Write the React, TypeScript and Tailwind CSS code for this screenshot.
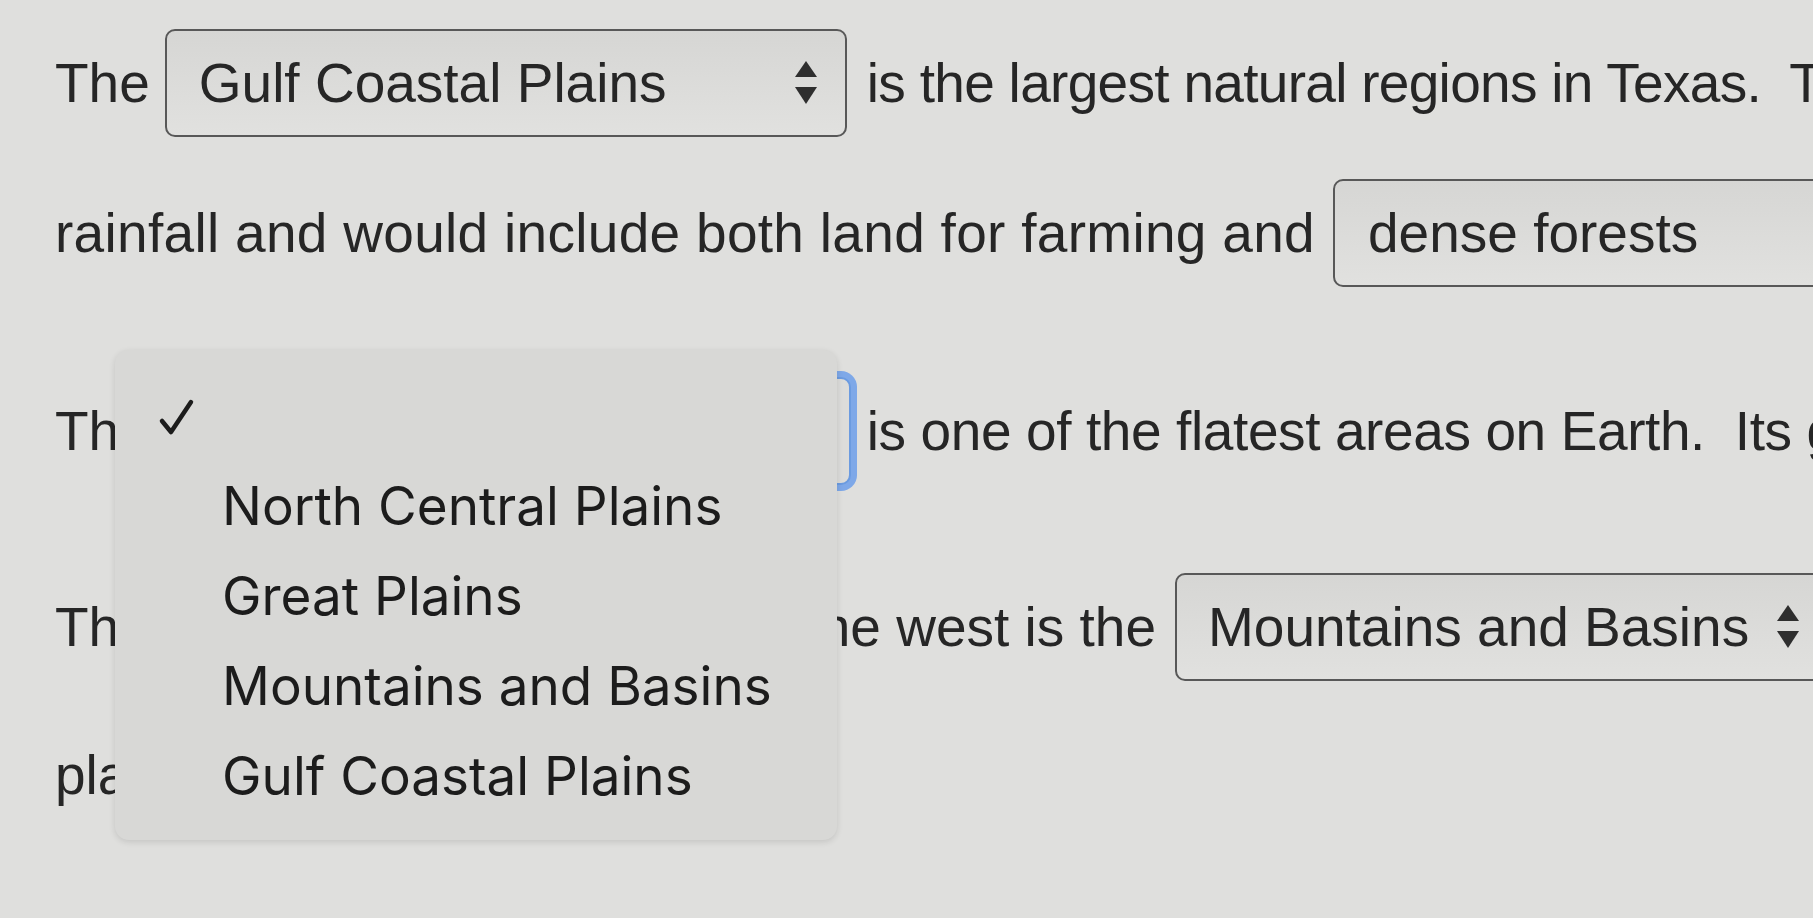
import React from "react";

const textFont = { fontFamily: '"Liberation Sans", Arial, sans-serif' };

function Arrows() {
  return (
    <svg width="22" height="46" viewBox="0 0 22 46" className="shrink-0">
      <polygon points="11,1 22,17 0,17" fill="#2e2e2e" />
      <polygon points="0,27 22,27 11,44" fill="#2e2e2e" />
    </svg>
  );
}

function Select({
  label,
  className,
  padLeft,
  arrows = true,
}: {
  label: string;
  className: string;
  padLeft: string;
  arrows?: boolean;
}) {
  return (
    <div
      className={`shrink-0 h-[108px] rounded-[10px] border-2 border-[#585858] bg-gradient-to-b from-[#d6d6d4] to-[#e1e1df] flex items-center justify-between pr-[28px] ${padLeft} ${className}`}
    >
      <span>{label}</span>
      {arrows && <Arrows />}
    </div>
  );
}

export default function App() {
  return (
    <div
      className="relative w-full h-[918px] overflow-hidden bg-[#dfdfdd] text-[#262626] text-[55px] leading-normal"
      style={textFont}
    >
      <div className="flex flex-col pl-[55px] pt-[27px] whitespace-pre">
        {/* Row 1 */}
        <div className="h-[112px] flex items-center">
          <span>The</span>
          <Select label="Gulf Coastal Plains" className="ml-[15px] w-[682px]" padLeft="pl-[32px]" />
          <span className="ml-[20px] tracking-[-0.7px]">is the largest natural regions in Texas.  The</span>
        </div>

        {/* Row 2 */}
        <div className="mt-[38px] h-[112px] flex items-center">
          <span className="tracking-[0.3px]">rainfall and would include both land for farming and</span>
          <Select label="dense forests" className="ml-[18px] w-[640px]" padLeft="pl-[33px]" arrows={false} />
        </div>

        {/* Row 3 */}
        <div className="mt-[86px] h-[112px] flex items-center">
          <span>The</span>
          <div className="ml-[15px] w-[686px] h-[108px] shrink-0 rounded-[10px] border-2 border-[#6b9be0] bg-[#dcdcda] shadow-[0_0_0_6px_#7ea8e8]" />
          <span className="ml-[16px] tracking-[-0.4px]">is one of the flatest areas on Earth.  Its grasslands</span>
        </div>

        {/* Row 4 */}
        <div className="mt-[84px] h-[112px] flex items-center">
          <div className="w-[1101px] shrink-0 flex justify-between">
            <span>The</span>
            <span>the west is the</span>
          </div>
          <Select label="Mountains and Basins" className="ml-[19px] w-[654px]" padLeft="pl-[31px]" />
        </div>

        {/* Row 5 */}
        <div className="mt-[36px] h-[112px] flex items-center">
          <span>plains.</span>
        </div>
      </div>

      {/* Open dropdown menu */}
      <div
        className="absolute left-[115px] top-[350px] w-[722px] h-[490px] rounded-[14px] bg-[#d8d8d6] shadow-[0_2px_6px_rgba(0,0,0,0.12)] pt-[22px] text-[#1c1c1c]"
        style={{ fontFamily: 'Inter, "Noto Sans", sans-serif', fontSize: "53px" }}
      >
        <div className="h-[90px] flex items-center pl-[42px]">
          <svg width="38" height="40" viewBox="0 0 38 40">
            <path d="M5 24 L14 35 L34 5" fill="none" stroke="#1c1c1c" strokeWidth="4.5" strokeLinecap="round" strokeLinejoin="round" />
          </svg>
        </div>
        {["North Central Plains", "Great Plains", "Mountains and Basins", "Gulf Coastal Plains"].map((t) => (
          <div key={t} className="h-[90px] flex items-center pl-[107px] whitespace-nowrap">
            {t}
          </div>
        ))}
      </div>
    </div>
  );
}
